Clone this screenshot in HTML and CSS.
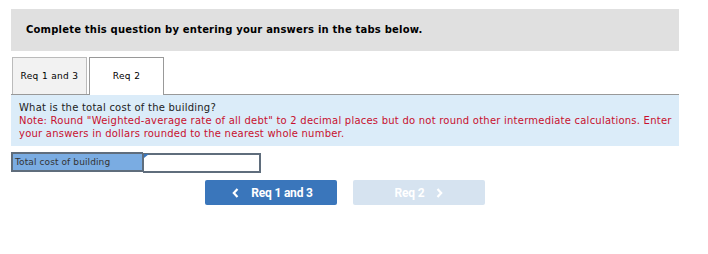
FILE: index.html
```html
<!DOCTYPE html>
<html lang="en">

<head>
    <meta charset="UTF-8">
    <meta name="viewport" content="width=device-width, initial-scale=1.0">
    <title>Req 2</title>
    <link rel="stylesheet" href="styles.css">
</head>

<body>
    <div id="wrap">
        <div class="instructions">Complete this question by entering your answers in the tabs below.</div>
        <div class="tabs">
            <div class="tab">Req 1 and 3</div>
            <div class="tab active">Req 2</div>
        </div>
        <div class="question">
            <div>What is the total cost of the building?</div>
            <div class="note">Note: Round "Weighted-average rate of all debt" to 2 decimal places but do not round other intermediate calculations. Enter your answers in dollars rounded to the nearest whole number.</div>
        </div>
        <div class="answerRow">
            <div class="answerLabel">Total cost of building</div>
            <div class="answerCell"><input type="text" class="answerInput"></div>
        </div>
        <div class="nav">
            <button class="navBtn prev">
                <svg class="chevron" width="7" height="10" viewBox="0 0 7 10"><path d="M5.5 1 L1.8 5 L5.5 9" fill="none" stroke="#fff" stroke-width="2.2"/></svg>
                Req 1 and 3
            </button>
            <button class="navBtn next disabled">
                Req 2
                <svg class="chevron" width="7" height="10" viewBox="0 0 7 10"><path d="M1.5 1 L5.2 5 L1.5 9" fill="none" stroke="#fff" stroke-width="2.2"/></svg>
            </button>
        </div>
    </div>
</body>

</html>
```

FILE: styles.css
```css
body {
    margin: 0;
    font-family: "DejaVu Sans", Verdana, sans-serif;
    color: #000;
}

#wrap {
    width: 668px;
    padding: 9px 0 0 11px;
}

.instructions {
    background: #e0e0e0;
    height: 42px;
    line-height: 42px;
    padding-left: 15px;
    font-size: 10px;
    font-weight: bold;
    letter-spacing: 0.2px;
}

.tabs {
    display: flex;
    gap: 2px;
    margin-top: 6px;
    padding-left: 1px;
    border-bottom: 1px solid #999;
    height: 37px;
}

.tab {
    width: 73px;
    height: 36px;
    line-height: 37px;
    text-align: center;
    font-size: 9px;
    letter-spacing: 0.35px;
    background: #f2f2f2;
    border: 1px solid #bbb;
    border-bottom: none;
}

.tab.active {
    background: #fff;
    border-color: #999;
    height: 37px;
    margin-bottom: -1px;
}

.question {
    background: #dbecf9;
    padding: 6px 5px 6px 8px;
    font-size: 10px;
    line-height: 13px;
    letter-spacing: 0.23px;
    color: #222;
}

.note {
    color: #c8102e;
}

.answerRow {
    display: flex;
    margin-top: 6px;
    height: 20px;
}

.answerLabel {
    width: 127px;
    background: #7aace2;
    border: 2px solid #5f6d7c;
    border-right: 1px solid #5f6d7c;
    font-size: 9px;
    letter-spacing: 0.1px;
    line-height: 16px;
    padding-left: 2px;
    color: #333;
}

.answerCell {
    position: relative;
}

.answerCell::after {
    content: "";
    position: absolute;
    z-index: 1;
    left: 1px;
    top: 2px;
    border-top: 4px solid #3a76bb;
    border-right: 5px solid transparent;
}

.answerInput {
    box-sizing: border-box;
    width: 118px;
    height: 20px;
    margin: 0;
    border: 2px solid #5f6d7c;
    border-left: 1px solid #5f6d7c;
    padding: 0 3px;
    outline: none;
}

.nav {
    display: flex;
    justify-content: center;
    gap: 16px;
    margin-top: 8px;
}

.navBtn {
    display: flex;
    align-items: center;
    justify-content: center;
    gap: 12px;
    width: 132px;
    height: 25px;
    border: none;
    border-radius: 2px;
    font-family: Roboto, "Liberation Sans", sans-serif;
    font-weight: bold;
    font-size: 12px;
    letter-spacing: -0.2px;
    color: #fff;
    background: #3a76bb;
    padding: 0;
}

.navBtn.prev {
    padding-left: 3px;
}

.navBtn.disabled {
    background: #d6e3f0;
}
```
